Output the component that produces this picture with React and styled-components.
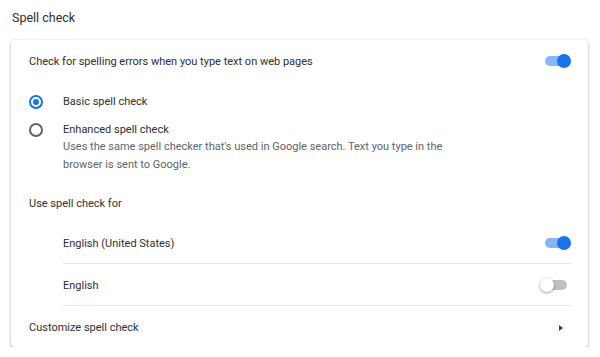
import React from 'react';
import styled, { createGlobalStyle } from 'styled-components';

const GlobalStyle = createGlobalStyle`
  html, body {
    margin: 0;
    padding: 0;
    background: #ffffff;
  }
  body {
    font-family: Roboto, "Liberation Sans", Arial, sans-serif;
    font-size: 11px;
    color: #2d2e31;
  }
`;

const Page = styled.div`
  padding: 0 12px 0 11px;
`;

const SectionTitle = styled.h2`
  margin: 0 0 0 1px;
  padding: 9px 0 13px;
  font-size: 12.5px;
  line-height: 18px;
  font-weight: 400;
  color: #2d2e31;
`;

const Card = styled.div`
  background: #ffffff;
  border-radius: 4px;
  box-shadow: 0 1px 2px 0 rgba(60, 64, 67, 0.3), 0 1px 3px 1px rgba(60, 64, 67, 0.15);
`;

const Row = styled.div`
  display: flex;
  align-items: center;
  justify-content: space-between;
  height: ${p => p.$height || 42}px;
  padding: 0 17px 0 18px;
`;

const Label = styled.span`
  display: block;
  font-size: 11px;
  line-height: 16px;
  padding-top: 2px;
  color: #2d2e31;
`;

const ToggleWrap = styled.div`
  position: relative;
  width: 31px;
  height: 14px;
  flex-shrink: 0;
`;

const Track = styled.div`
  position: absolute;
  left: 5px;
  top: 2px;
  width: 22px;
  height: 10px;
  border-radius: 5px;
  background: ${p => (p.$on ? '#8ab4f8' : '#bdc1c6')};
`;

const Knob = styled.div`
  position: absolute;
  top: 0;
  left: ${p => (p.$on ? 17 : 0)}px;
  width: 14px;
  height: 14px;
  border-radius: 50%;
  background: ${p => (p.$on ? '#1a73e8' : '#ffffff')};
  box-shadow: ${p => (p.$on ? 'none' : '0 1px 3px rgba(0, 0, 0, 0.4)')};
`;

function Toggle({ on }) {
  return (
    <ToggleWrap>
      <Track $on={on} />
      <Knob $on={on} />
    </ToggleWrap>
  );
}

const RadioGroup = styled.div`
  padding: 5px 0 11px;
`;

const RadioRow = styled.div`
  display: flex;
  align-items: ${p => (p.$top ? 'flex-start' : 'center')};
  min-height: 28px;
  padding: ${p => (p.$top ? '5px' : '0')} 17px 0 18px;
`;

const RadioCircle = styled.div`
  box-sizing: border-box;
  width: 14px;
  height: 14px;
  margin: ${p => (p.$top ? '3px' : '1px')} 20px 0 0;
  border-radius: 50%;
  border: 2px solid ${p => (p.$checked ? '#1a73e8' : '#5f6368')};
  display: flex;
  align-items: center;
  justify-content: center;
  flex-shrink: 0;

  &::after {
    content: '';
    display: ${p => (p.$checked ? 'block' : 'none')};
    width: 6px;
    height: 6px;
    border-radius: 50%;
    background: #1a73e8;
  }
`;

const RadioText = styled.div`
  display: flex;
  flex-direction: column;
`;

const SubText = styled.div`
  max-width: 400px;
  font-size: 11px;
  line-height: 17.5px;
  color: #5f6368;
`;

const LanguageList = styled.div`
  padding: 0 16px 0 52px;
`;

const LangRow = styled.div`
  display: flex;
  align-items: center;
  justify-content: space-between;
  height: 41px;
  padding-right: 1px;
  border-bottom: 1px solid #e8eaed;
`;

const Arrow = styled.svg`
  width: 8px;
  height: 8px;
  margin: 2px 6px 0 0;
  fill: #3c4043;
`;

export default function App() {
  return (
    <>
      <GlobalStyle />
      <Page>
        <SectionTitle>Spell check</SectionTitle>
        <Card>
          <Row $height={42}>
            <Label>Check for spelling errors when you type text on web pages</Label>
            <Toggle on />
          </Row>
          <RadioGroup>
            <RadioRow>
              <RadioCircle $checked />
              <Label>Basic spell check</Label>
            </RadioRow>
            <RadioRow $top>
              <RadioCircle $top />
              <RadioText>
                <Label>Enhanced spell check</Label>
                <SubText>
                  Uses the same spell checker that's used in Google search. Text you type in the
                  browser is sent to Google.
                </SubText>
              </RadioText>
            </RadioRow>
          </RadioGroup>
          <Row $height={38}>
            <Label>Use spell check for</Label>
          </Row>
          <LanguageList>
            <LangRow>
              <Label>English (United States)</Label>
              <Toggle on />
            </LangRow>
            <LangRow>
              <Label>English</Label>
              <Toggle />
            </LangRow>
          </LanguageList>
          <Row $height={41}>
            <Label>Customize spell check</Label>
            <Arrow viewBox="0 0 8 8">
              <path d="M2 1 L6 4 L2 7 Z" />
            </Arrow>
          </Row>
        </Card>
      </Page>
    </>
  );
}
